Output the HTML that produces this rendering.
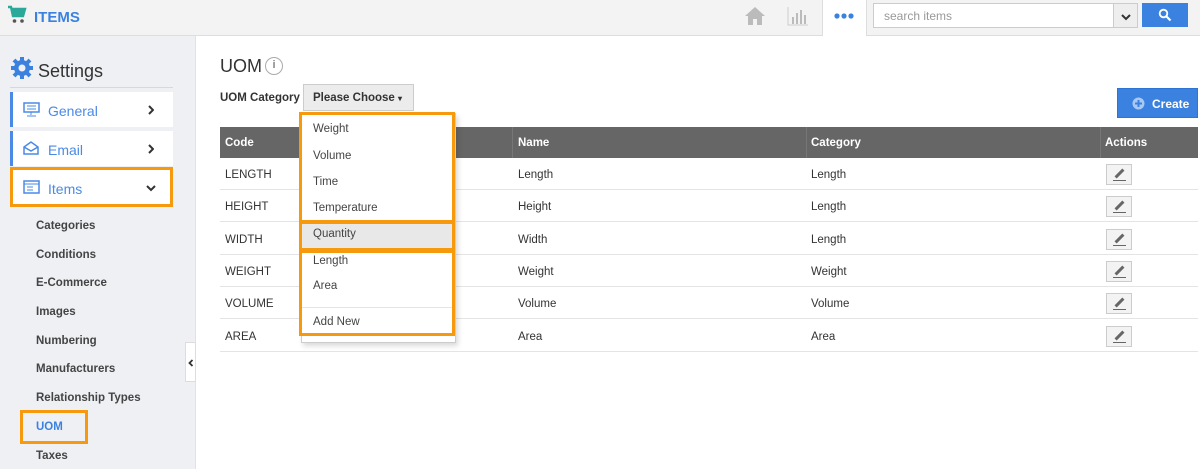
<!DOCTYPE html>
<html><head><style>
*{box-sizing:border-box;margin:0;padding:0}
svg{display:block}
body{width:1200px;height:469px;overflow:hidden;font-family:"Liberation Sans",sans-serif;background:#fff;position:relative;color:#333}
.abs{position:absolute}
.top{left:0;top:0;width:1200px;height:36px;background:#f3f3f3;border-bottom:1px solid #ddd}
.side{left:0;top:36px;width:196px;height:433px;background:#eef0f4;border-right:1px solid #e2e2e2}
.nav{position:absolute;left:10px;width:163px;height:35px;background:#fff;border-left:3px solid #4a8ae6;color:#4a8ae6;font-size:14px}
.nav span{position:absolute;left:35px;top:11px}
.nav b{position:absolute;right:18px;top:8px;color:#333;font-size:17px}
.sub{position:absolute;left:36px;font-size:11.5px;font-weight:bold;color:#444}
.th{top:127px;height:31px;background:#666;color:#fff;font-size:11.5px;font-weight:bold}
.row{position:absolute;left:220px;width:978px;height:32px;border-bottom:1px solid #e4e4e4;font-size:11.5px;color:#333}
.row span{position:absolute;top:11px}
.ed{position:absolute;left:886px;top:6px;width:26px;height:21px;border:1px solid #ccc;background:#f3f3f3}
.mi{position:absolute;left:313px;font-size:11.5px;color:#444}
.ed::after{content:"";position:absolute;left:11px;top:3px;width:3px;height:11px;background:#666;transform:rotate(45deg)}
.ed::before{content:"";position:absolute;left:6px;top:15px;width:13px;height:1px;background:#666}
</style></head><body>
<div class="abs top">
<svg class="abs" style="left:7px;top:5px" width="20" height="20" viewBox="0 0 20 20"><path d="M1 2h3l2 9h10l2-7H5" fill="none" stroke="#2aa89a" stroke-width="2.4"/><rect x="6" y="5" width="11" height="6" fill="#2aa89a"/><circle cx="7.5" cy="16" r="1.8" fill="#555"/><circle cx="15" cy="16" r="1.8" fill="#555"/></svg>
<div class="abs" style="left:34px;top:9px;font-size:15px;font-weight:bold;color:#3b82e0">ITEMS</div>
<svg class="abs" style="left:744px;top:6px" width="22" height="20" viewBox="0 0 22 20"><path d="M11 1L1 10h3v9h5v-6h4v6h5v-9h3z" fill="#bbb"/></svg>
<svg class="abs" style="left:787px;top:6px" width="22" height="20" viewBox="0 0 22 20"><path d="M1 1v18h20" stroke="#ccc" fill="none"/><rect x="5" y="11" width="2" height="7" fill="#bbb"/><rect x="9" y="7" width="2" height="11" fill="#bbb"/><rect x="13" y="4" width="2" height="14" fill="#bbb"/><rect x="17" y="9" width="2" height="9" fill="#bbb"/></svg>
<div class="abs" style="left:822px;top:0;width:45px;height:36px;background:#fff;border-left:1px solid #ddd;border-right:1px solid #ddd"></div>
<svg class="abs" style="left:834px;top:13px" width="20" height="6"><circle cx="3" cy="3" r="2.6" fill="#3b82e0"/><circle cx="10" cy="3" r="2.6" fill="#3b82e0"/><circle cx="17" cy="3" r="2.6" fill="#3b82e0"/></svg>
<div class="abs" style="left:873px;top:3px;width:265px;height:25px;background:#fff;border:1px solid #ccc"></div>
<div class="abs" style="left:884px;top:9px;font-size:12px;color:#999">search items</div>
<div class="abs" style="left:1113px;top:3px;width:25px;height:25px;background:#eee;border:1px solid #ccc"><svg style="position:absolute;left:7px;top:10px" width="10" height="7"><path d="M1 1l4 4 4-4" stroke="#333" stroke-width="2" fill="none"/></svg></div>
<div class="abs" style="left:1142px;top:3px;width:46px;height:24px;background:#3b82e0"><svg style="position:absolute;left:16px;top:5px" width="14" height="14"><circle cx="5.5" cy="5.5" r="3.8" stroke="#fff" stroke-width="1.8" fill="none"/><path d="M8.5 8.5l4 4" stroke="#fff" stroke-width="2.2"/></svg></div>
</div>
<div class="abs side">
<svg class="abs" style="left:11px;top:21px" width="22" height="22" viewBox="0 0 22 22"><circle cx="11" cy="11" r="8" fill="#3b82e0"/><g stroke="#3b82e0" stroke-width="4"><path d="M11 0v22M0 11h22M3 3l16 16M19 3L3 19"/></g><circle cx="11" cy="11" r="3.5" fill="#eef0f4"/></svg>
<div class="abs" style="left:38px;top:25px;font-size:18px;color:#333">Settings</div>
<div class="abs" style="left:10px;top:51px;width:163px;height:1px;background:#d8d8d8"></div>
</div>
<div class="nav" style="top:92px"><svg style="position:absolute;left:10px;top:10px" width="17" height="15"><rect x="1" y="1" width="15" height="9" fill="none" stroke="#4a8ae6" stroke-width="1.5"/><path d="M4 4h9M4 7h9M8 10v3M4 14h9" stroke="#4a8ae6"/></svg><span>General</span><svg style="position:absolute;right:19px;top:13px" width="6" height="10"><path d="M1 1l4 4-4 4" stroke="#333" stroke-width="2" fill="none"/></svg></div>
<div class="nav" style="top:131px"><svg style="position:absolute;left:10px;top:10px" width="17" height="14"><path d="M1 6l7-5 7 5v7H1z M1 6l7 4 7-4" fill="none" stroke="#4a8ae6" stroke-width="1.5"/></svg><span>Email</span><svg style="position:absolute;right:19px;top:13px" width="6" height="10"><path d="M1 1l4 4-4 4" stroke="#333" stroke-width="2" fill="none"/></svg></div>
<div class="nav" style="top:170px"><svg style="position:absolute;left:10px;top:10px" width="17" height="14"><rect x="1" y="1" width="15" height="12" fill="none" stroke="#4a8ae6" stroke-width="1.5"/><path d="M1 4h15M4 7h6M4 10h6" stroke="#4a8ae6"/></svg><span>Items</span><svg style="position:absolute;right:17px;top:15px" width="10" height="7"><path d="M1 1l4 4 4-4" stroke="#333" stroke-width="2" fill="none"/></svg></div>
<div class="abs" style="left:10px;top:167px;width:163px;height:40px;border:3px solid #f7990c"></div>
<div class="sub" style="top:220px">Categories</div>
<div class="sub" style="top:249px">Conditions</div>
<div class="sub" style="top:277px">E-Commerce</div>
<div class="sub" style="top:306px">Images</div>
<div class="sub" style="top:335px">Numbering</div>
<div class="sub" style="top:363px">Manufacturers</div>
<div class="sub" style="top:392px">Relationship Types</div>
<div class="sub" style="top:421px;color:#3b82e0">UOM</div>
<div class="abs" style="left:20px;top:410px;width:68px;height:34px;border:3px solid #f7990c"></div>
<div class="sub" style="top:450px">Taxes</div>
<div class="abs" style="left:185px;top:342px;width:11px;height:40px;background:#fff;border:1px solid #ddd"><svg style="position:absolute;left:2px;top:16px" width="6" height="8"><path d="M4.5 1l-3 3 3 3" stroke="#333" stroke-width="1.8" fill="none"/></svg></div>

<div class="abs" style="left:220px;top:56px;font-size:18px;color:#333">UOM</div>
<div class="abs" style="left:265px;top:57px;width:18px;height:18px;border-radius:50%;border:1.5px solid #aaa;color:#888;font-size:11px;text-align:center;line-height:15px;font-weight:bold">i</div>
<div class="abs" style="left:220px;top:92px;font-size:11.5px;font-weight:bold">UOM Category</div>
<div class="abs" style="left:303px;top:84px;width:111px;height:27px;background:#ececec;border:1px solid #ccc;font-size:11.5px;font-weight:bold;padding:7px 0 0 9px">Please Choose <span style="font-size:8px">&#x25BE;</span></div>
<div class="abs" style="left:1117px;top:88px;width:81px;height:30px;background:#3b82e0;border:1px solid #2f74d0;color:#fff;font-size:12px;font-weight:bold"><svg style="position:absolute;left:14px;top:8px" width="13" height="13"><circle cx="6.5" cy="6.5" r="6" fill="#a9c8f2"/><path d="M6.5 3v7M3 6.5h7" stroke="#3b82e0" stroke-width="2"/></svg><span style="position:absolute;left:34px;top:8px">Create</span></div>

<div class="abs th" style="left:220px;width:978px"></div>
<div class="abs th" style="left:225px;background:none;padding-top:10px">Code</div>
<div class="abs th" style="left:518px;background:none;padding-top:10px">Name</div>
<div class="abs th" style="left:811px;background:none;padding-top:10px">Category</div>
<div class="abs th" style="left:1105px;background:none;padding-top:10px">Actions</div>
<div class="abs" style="left:512px;top:127px;width:1px;height:31px;background:#777"></div>
<div class="abs" style="left:806px;top:127px;width:1px;height:31px;background:#777"></div>
<div class="abs" style="left:1100px;top:127px;width:1px;height:31px;background:#777"></div>

<div class="row" style="top:158px"><span style="left:5px">LENGTH</span><span style="left:298px">Length</span><span style="left:591px">Length</span><div class="ed"></div></div>
<div class="row" style="top:190px"><span style="left:5px">HEIGHT</span><span style="left:298px">Height</span><span style="left:591px">Length</span><div class="ed"></div></div>
<div class="row" style="top:223px"><span style="left:5px">WIDTH</span><span style="left:298px">Width</span><span style="left:591px">Length</span><div class="ed"></div></div>
<div class="row" style="top:255px"><span style="left:5px">WEIGHT</span><span style="left:298px">Weight</span><span style="left:591px">Weight</span><div class="ed"></div></div>
<div class="row" style="top:287px"><span style="left:5px">VOLUME</span><span style="left:298px">Volume</span><span style="left:591px">Volume</span><div class="ed"></div></div>
<div class="row" style="top:320px"><span style="left:5px">AREA</span><span style="left:298px">Area</span><span style="left:591px">Area</span><div class="ed"></div></div>

<div class="abs" style="left:301px;top:113px;width:155px;height:230px;background:#fff;border:1px solid #ccc;box-shadow:2px 3px 5px rgba(0,0,0,.15)"></div>
<div class="abs" style="left:302px;top:222px;width:150px;height:27px;background:#e8e8e8"></div>
<div class="abs" style="left:302px;top:307px;width:150px;height:1px;background:#e5e5e5"></div>
<div class="mi" style="top:123px">Weight</div>
<div class="mi" style="top:150px">Volume</div>
<div class="mi" style="top:176px">Time</div>
<div class="mi" style="top:202px">Temperature</div>
<div class="mi" style="top:228px">Quantity</div>
<div class="mi" style="top:255px">Length</div>
<div class="mi" style="top:280px">Area</div>
<div class="mi" style="top:316px">Add New</div>
<div class="abs" style="left:299px;top:112px;width:156px;height:112px;border:3px solid #f7990c"></div>
<div class="abs" style="left:299px;top:220px;width:156px;height:31px;border:3px solid #f7990c"></div>
<div class="abs" style="left:299px;top:250px;width:156px;height:86px;border:3px solid #f7990c"></div>
</body></html>
